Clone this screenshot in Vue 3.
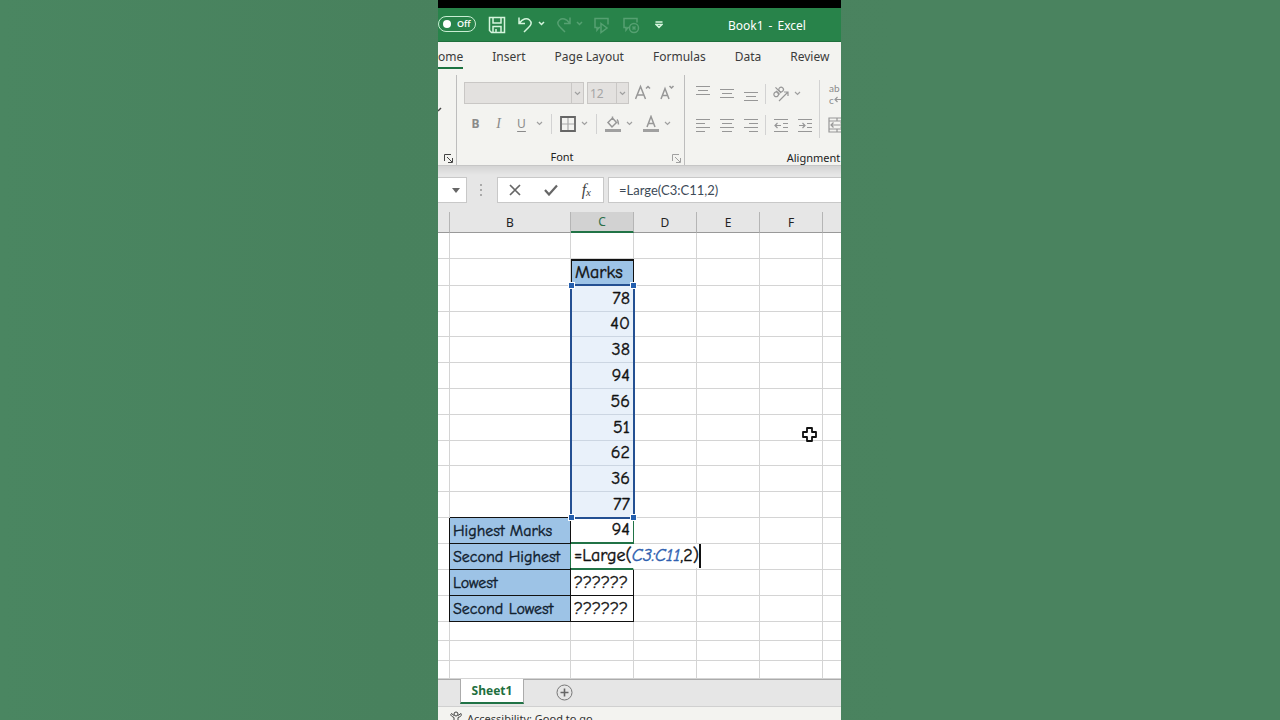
<script setup>
import { ref } from 'vue'

const tabs = ['ome', 'Insert', 'Page Layout', 'Formulas', 'Data', 'Review']
const formula = ref('=Large(C3:C11,2)')
const columns = [
  { id: 'A', label: '', width: 12 },
  { id: 'B', label: 'B', width: 121 },
  { id: 'C', label: 'C', width: 63 },
  { id: 'D', label: 'D', width: 63 },
  { id: 'E', label: 'E', width: 63 },
  { id: 'F', label: 'F', width: 63 },
  { id: 'G', label: '' }
]
const rows = [
  { h: 26 },
  { h: 27, c: 'Marks', kind: 'title' },
  { h: 26, c: '78', kind: 'mark' },
  { h: 25, c: '40', kind: 'mark' },
  { h: 26, c: '38', kind: 'mark' },
  { h: 26, c: '94', kind: 'mark' },
  { h: 26, c: '56', kind: 'mark' },
  { h: 26, c: '51', kind: 'mark' },
  { h: 25, c: '62', kind: 'mark' },
  { h: 26, c: '36', kind: 'mark' },
  { h: 26, c: '77', kind: 'mark last' },
  { h: 26, b: 'Highest Marks', c: '94', kind: 'num boxed' },
  { h: 26, b: 'Second Highest', kind: 'editing' },
  { h: 26, b: 'Lowest', c: '??????', kind: 'boxed' },
  { h: 26, b: 'Second Lowest', c: '??????', kind: 'boxed' },
  { h: 19 },
  { h: 20 },
  { h: 18 }
]
</script>

<template>
  <div class="stage">
    <main class="excel">
      <div class="notch"></div>
      <header class="titlebar">
        <button class="toggle" role="switch" aria-checked="false"><i class="knob"></i>Off</button>
        <button class="qa save" aria-label="Save">
          <svg width="18" height="18" viewBox="0 0 18 18"><path d="M1.5 1.5h15v15h-13l-2-2zM5 1.5v5.500h8v-5.500M5 16.500v-6h8v6M8 16v-3" /></svg>
        </button>
        <button class="qa undo" aria-label="Undo">
          <svg width="28" height="18" viewBox="0 0 28 18"><path d="M2 1.500v6h6M2.500 7c3-4 7-5.500 10-3s1.500 5.500-1 7.500l-4.500 4.500" /><path d="M22 6l2.500 2.500L27 6" /></svg>
        </button>
        <button class="qa redo dim" aria-label="Redo">
          <svg width="28" height="18" viewBox="0 0 28 18"><path d="M14 1.500v6h-6M13.500 7c-3-4-7-5.500-10-3s-1.500 5.500 1 7.500l4.500 4.500" /><path d="M21 6l2.500 2.500L26 6" /></svg>
        </button>
        <button class="qa play dim" aria-label="Run">
          <svg width="18" height="18" viewBox="0 0 18 18"><path d="M7 11.500h-1l-2 2.500v-2.500H2v-9h13v6M8 7.500l6 4.500-6 4.500z" /></svg>
        </button>
        <button class="qa stop dim" aria-label="Stop">
          <svg width="18" height="18" viewBox="0 0 18 18"><path d="M7 11.500h-1l-2 2.500v-2.500H2v-9h13v4" /><circle cx="12" cy="12" r="4.500" /><path d="M10.500 10.500l3 3m0-3l-3 3" /></svg>
        </button>
        <button class="qa more" aria-label="Customize toolbar">
          <svg width="8" height="8" viewBox="0 0 8 8"><path d="M0.500 1h7M1 3.500l3 3 3-3z" /></svg>
        </button>
        <span class="book"><span>Book1</span><span>-</span><span>Excel</span></span>
      </header>

      <nav class="tabs">
        <a v-for="(t, i) in tabs" :key="t" href="#" :class="{ on: i === 0 }">{{ t }}</a>
      </nav>

      <section class="ribbon">
        <div class="group clip">
          <svg class="edge" width="4" height="6" viewBox="0 0 4 6"><path d="M0 4l3-3" stroke="#444" stroke-width="1.500" fill="none" /></svg>
          <button class="launch dark" aria-label="Clipboard settings">
            <svg width="9" height="9" viewBox="0 0 9 9"><path d="M0.500 7V0.500H7M3 3l5 5M8.500 4v4.500H4" /></svg>
          </button>
        </div>
        <div class="group font">
          <div class="row">
            <span class="combo wide"><select aria-label="Font name" disabled><option></option></select><i><svg class="chev" width="7" height="5" viewBox="0 0 7 5"><path d="M1 1l2.500 2.500L6 1" /></svg></i></span>
            <span class="combo"><select aria-label="Font size" disabled><option>12</option></select><i><svg class="chev" width="7" height="5" viewBox="0 0 7 5"><path d="M1 1l2.500 2.500L6 1" /></svg></i></span>
            <button class="t w24" aria-label="Increase font size"><svg width="16" height="18" viewBox="0 0 16 18"><path stroke-width="1.500" d="M0.500 15L5.500 2.500l5 12.500M2.500 11h6M11 4.500l2-2 2 2" /></svg></button>
            <button class="t w24" aria-label="Decrease font size"><svg width="16" height="18" viewBox="0 0 16 18"><path stroke-width="1.500" d="M2 15L6 4.500 10 15M3.500 11.500h5M10.500 2l2 2 2-2" /></svg></button>
          </div>
          <div class="row">
            <button class="t w23 bold">B</button>
            <button class="t w23 ital">I</button>
            <button class="t w23 under">U</button>
            <button class="t w12" aria-label="Underline styles"><svg class="chev" width="7" height="5" viewBox="0 0 7 5"><path d="M1 1l2.500 2.500L6 1" /></svg></button>
            <i class="sep"></i>
            <button class="t w20" aria-label="Borders"><svg width="16" height="16" viewBox="0 0 16 16"><path d="M1 1h14v14H1z" stroke="#666" stroke-width="1.800" /><path d="M8 2v12M2 8h12" stroke="#aaa" /></svg></button>
            <button class="t w12" aria-label="Border styles"><svg class="chev" width="7" height="5" viewBox="0 0 7 5"><path d="M1 1l2.500 2.500L6 1" /></svg></button>
            <i class="sep"></i>
            <button class="t w20" aria-label="Fill color"><svg width="16" height="18" viewBox="0 0 16 18"><path stroke-width="1.500" d="M3 7.500L7.500 3l4 4.500L7 12zM7.500 5V1.500M12 4.500c1 1 1.500 2.500 1.500 5" /><path d="M0 15.500h16" stroke="#a0a0a0" stroke-width="3" /></svg></button>
            <button class="t w12" aria-label="Fill colors"><svg class="chev" width="7" height="5" viewBox="0 0 7 5"><path d="M1 1l2.500 2.500L6 1" /></svg></button>
            <button class="t w20 gap" aria-label="Font color"><svg width="16" height="18" viewBox="0 0 16 18"><path stroke-width="1.500" d="M4 12L8 1.500 12 12M5.500 8.500h5" /><path d="M0 15.500h16" stroke="#a0a0a0" stroke-width="3" /></svg></button>
            <button class="t w12" aria-label="Font colors"><svg class="chev" width="7" height="5" viewBox="0 0 7 5"><path d="M1 1l2.500 2.500L6 1" /></svg></button>
          </div>
          <div class="caption">Font</div>
          <button class="launch" aria-label="Font settings">
            <svg width="9" height="9" viewBox="0 0 9 9"><path d="M0.500 7V0.500H7M3 3l5 5M8.500 4v4.500H4" /></svg>
          </button>
        </div>
        <div class="group align">
          <div class="cols">
            <div class="stack">
              <div class="row">
                <button class="t w24" aria-label="Top align"><svg width="14" height="18" viewBox="0 0 14 18"><path d="M0 1.500h14M2 5.500h10M0 9.500h14" /></svg></button>
                <button class="t w24" aria-label="Middle align"><svg width="14" height="18" viewBox="0 0 14 18"><path d="M0 4.500h14M2 8.500h10M0 12.500h14" /></svg></button>
                <button class="t w24" aria-label="Bottom align"><svg width="14" height="18" viewBox="0 0 14 18"><path d="M0 7.500h14M2 11.500h10M0 15.500h14" /></svg></button>
                <i class="sep near"></i>
                <button class="t w24" aria-label="Orientation"><svg width="18" height="18" viewBox="0 0 18 18"><g transform="rotate(-45 7 8)"><circle cx="4" cy="7" r="2.300" /><path d="M6.500 4.500v5M8.500 1.500v8" /><circle cx="11" cy="7" r="2.300" /></g><path d="M7 16L16 7M12 7h4v4" /></svg></button>
                <button class="t w8" aria-label="Orientation options"><svg class="chev" width="7" height="5" viewBox="0 0 7 5"><path d="M1 1l2.500 2.500L6 1" /></svg></button>
              </div>
              <div class="row">
                <button class="t w24" aria-label="Align left"><svg width="14" height="14" viewBox="0 0 14 14"><path d="M0 1.500h14M0 5.500h9M0 9.500h14M0 13.500h9" /></svg></button>
                <button class="t w24" aria-label="Center"><svg width="14" height="14" viewBox="0 0 14 14"><path d="M0 1.500h14M2 5.500h10M0 9.500h14M2 13.500h10" /></svg></button>
                <button class="t w24" aria-label="Align right"><svg width="14" height="14" viewBox="0 0 14 14"><path d="M0 1.500h14M5 5.500h9M0 9.500h14M5 13.500h9" /></svg></button>
                <i class="sep near"></i>
                <button class="t w24" aria-label="Decrease indent"><svg width="14" height="14" viewBox="0 0 14 14"><path d="M0 1.500h14M9 5.500h5M9 9.500h5M0 13.500h14M1 7.500h6M3.500 5L1 7.500 3.500 10" /></svg></button>
                <button class="t w24" aria-label="Increase indent"><svg width="14" height="14" viewBox="0 0 14 14"><path d="M0 1.500h14M9 5.500h5M9 9.500h5M0 13.500h14M1 7.500h6M4.500 5L7 7.500 4.500 10" /></svg></button>
              </div>
            </div>
            <i class="sep tall"></i>
            <div class="stack right">
              <div class="row"><button class="t wrap" aria-label="Wrap text"><span>ab</span><span>c<svg width="8" height="7" viewBox="0 0 8 7"><path d="M1 3.500h6M3.500 1L1 3.500 3.500 6" /></svg></span></button></div>
              <div class="row"><button class="t" aria-label="Merge"><svg width="18" height="16" viewBox="0 0 18 16"><path d="M1 1h16v14H1zM1 4h16M1 12h16M9 1v3M9 12v3M3 8h12M5.500 5.500L3 8l2.500 2.500M12.500 5.500L15 8l-2.500 2.500" /></svg></button></div>
            </div>
          </div>
          <div class="caption">Alignment</div>
        </div>
      </section>

      <section class="fbar">
        <button class="namebox" aria-label="Name box"><svg width="8" height="5" viewBox="0 0 8 5"><path d="M0 0h8L4 5z" fill="#666" /></svg></button>
        <svg class="dots" width="2" height="12" viewBox="0 0 2 12"><path d="M0 0h2v2H0zM0 5h2v2H0zM0 10h2v2H0z" fill="#aaa" /></svg>
        <div class="fx">
          <button aria-label="Cancel"><svg width="12" height="12" viewBox="0 0 12 12"><path d="M1 1l10 10M11 1L1 11" stroke="#666" stroke-width="1.700" fill="none" /></svg></button>
          <button aria-label="Enter"><svg width="14" height="12" viewBox="0 0 14 12"><path d="M1 6l4 4.500L13 1.500" stroke="#666" stroke-width="2.200" fill="none" /></svg></button>
          <button class="fn" aria-label="Insert function">f<sub>x</sub></button>
        </div>
        <input v-model="formula" class="formula" aria-label="Formula" />
      </section>

      <section class="sheet">
        <table>
          <colgroup>
            <col v-for="c in columns" :key="c.id" :style="c.width ? { width: c.width + 'px' } : null" />
          </colgroup>
          <thead>
            <tr>
              <th v-for="c in columns" :key="c.id" :class="{ active: c.id === 'C' }">{{ c.label }}</th>
            </tr>
          </thead>
          <tbody>
            <tr v-for="(r, i) in rows" :key="i" :style="{ height: r.h + 'px' }">
              <td></td>
              <td :class="{ label: r.b, above: i === 10 }">{{ r.b }}</td>
              <td :class="r.kind">
                <div v-if="r.kind === 'editing'" class="editor">=Large(<em>C3:C11</em>,2)</div>
                <template v-else>{{ r.c }}</template>
              </td>
              <td></td><td></td><td></td><td></td>
            </tr>
          </tbody>
        </table>
        <div class="range"><i></i><i></i><i></i><i></i></div>
        <svg class="pointer" width="17" height="17" viewBox="0 0 17 17"><path d="M6 2h5v4h4v5h-4v4H6v-4H2V6h4z" fill="#fff" stroke="#111" stroke-width="1.800" stroke-linejoin="round" /></svg>
      </section>

      <footer class="sheets">
        <button class="sheet-tab">Sheet1</button>
        <button class="add" aria-label="New sheet"><svg width="17" height="17" viewBox="0 0 17 17"><circle cx="8.500" cy="8.500" r="7.500" fill="none" stroke="#777" /><path d="M8.500 4.500v8M4.500 8.500h8" stroke="#666" stroke-width="1.600" /></svg></button>
      </footer>
      <div class="status">
        <svg width="15" height="16" viewBox="0 0 15 16"><circle cx="6" cy="3" r="2" /><path d="M4 4.500L1.500 2.500M8 4.500l3-2M1.500 2.500C0 4 1 5 4 6.500v3L2.500 14M8 6.500c3-1 4-2 3-4M8 6.500v3M9 11l2 2 3.500-4" /></svg>
        <span>Accessibility: Good to go</span>
      </div>
    </main>
  </div>
</template>

<style>
body { background: #4a835f; overflow: hidden; }
</style>

<style scoped>
* { box-sizing: border-box; }
.stage {
  display: grid;
  grid-template-columns: 438fr 403fr 439fr;
  height: 100vh;
  overflow: hidden;
  background: linear-gradient(90deg, #4a8661 0, #48815d 30%, #4a835f 70%, #4a835f 100%);
  font-family: "Noto Sans", "Open Sans", sans-serif;
  font-size: 12px;
  color: #333;
}
.excel { grid-column: 2; display: flex; flex-direction: column; min-width: 0; overflow: hidden; background: #e6e6e6; }
.excel > * { flex: none; }
button { border: 0; padding: 0; background: none; font: inherit; color: inherit; display: flex; align-items: center; justify-content: center; }
svg { display: block; flex: none; }
.notch { height: 8px; background: #000; }
.titlebar { height: 34px; padding-top: 1px; display: flex; align-items: center; background: #28834a; border-bottom: 1px solid #1f6f3c; color: #fff; }
.toggle { width: 38px; height: 16px; border: 1px solid #c9eed3; border-radius: 8px; gap: 6px; font-family: "Open Sans", sans-serif; font-size: 9px; font-weight: 600; justify-content: flex-start; padding-left: 4px; margin-bottom: 3px; }
.knob { width: 8px; height: 8px; border-radius: 50%; background: #fff; }
.qa svg { fill: none; stroke: #d5f5dd; stroke-width: 1.5; }
.qa.dim svg { stroke: #55a071; }
.save { margin-left: 12px; }
.undo { margin-left: 11px; }
.redo { margin-left: 11px; }
.play { margin-left: 9px; }
.stop { margin-left: 11px; }
.more { margin-left: 15px; }
.book { display: flex; gap: 5px; margin-left: 65px; white-space: nowrap; }
.tabs { height: 33px; display: flex; gap: 29px; padding-top: 5px; background: #f3f3f0; }
.tabs a { height: 22px; line-height: 20px; color: #3b3b3b; text-decoration: none; white-space: nowrap; }
.tabs a.on { border-bottom: 2px solid #1c7340; }
.ribbon { height: 91px; display: flex; background: #f3f3f0; border-bottom: 1px solid #c6c6c6; overflow: hidden; }
.group { flex: none; position: relative; display: flex; flex-direction: column; border-right: 1px solid #bdbdbd; height: 90px; }
.clip { width: 19px; padding-top: 32px; }
.font { width: 228px; padding: 3px 0 0 7px; }
.align { width: 256px; padding: 3px 0 0 6px; }
.row { height: 31px; display: flex; align-items: center; }
.launch { position: absolute; right: 3px; bottom: 2px; }
.launch svg { fill: none; stroke: #a0a0a0; }
.launch.dark svg { stroke: #444; }
.combo { display: flex; width: 42px; height: 22px; margin-right: 2px; border: 1px solid #c9c7c5; background: #e3e1df; }
.combo.wide { width: 120px; margin-right: 3px; }
.combo select { flex: 1; min-width: 0; appearance: none; border: 0; background: none; padding: 0 0 0 2px; font: inherit; color: #a6a6a6; opacity: 1; }
.combo i { width: 12px; display: flex; align-items: center; justify-content: center; border-left: 1px solid #c9c7c5; }
.t { height: 24px; color: #8a8a8a; }
.t svg { fill: none; stroke: #979797; stroke-width: 1.2; }
.w8 { width: 8px; }
.w12 { width: 12px; }
.w20 { width: 20px; }
.w23 { width: 23px; }
.w24 { width: 24px; }
.gap { margin-left: 6px; }
.t .chev, .chev { fill: none; stroke: #a0a0a0; stroke-width: 1.2; }
.bold { font-weight: 700; }
.ital { font-family: "Liberation Serif", serif; font-style: italic; font-size: 14px; }
.under { text-decoration: underline; text-underline-offset: 3px; }
.sep { width: 1px; height: 20px; margin: 0 6px; background: #d2d2d2; }
.sep.near { margin: 0 3px 0 2px; }
.sep.tall { height: 58px; margin: 2px 4px 0 2px; }
.cols { display: flex; }
.stack.right .t { justify-content: flex-start; margin-left: 4px; }
.stack.right .wrap { flex-direction: column; align-items: flex-start; }
.wrap span { display: flex; align-items: center; font-family: Lato, sans-serif; font-size: 10px; line-height: 12px; padding-left: 1px; }
.caption { line-height: 16px; margin-top: 10px; margin-right: 4px; text-align: center; font-size: 11px; color: #222; }
.font .caption { margin-right: 24px; }
.fbar { height: 46px; padding: 11px 0 9px; display: flex; align-items: stretch; background: linear-gradient(#d4d4d4, #e6e6e6 9px); }
.namebox { width: 29px; background: #fff; border: 1px solid #c8c8c8; border-left: 0; padding-left: 8px; }
.dots { margin: 7px 15px 0 13px; }
.fx { width: 107px; display: flex; justify-content: space-between; padding: 0 12px 0 11px; margin-right: 4px; background: #fff; border: 1px solid #c8c8c8; }
.fn { font-family: "Liberation Serif", serif; font-style: italic; font-size: 16px; color: #444; }
.fn sub { font-size: 11px; line-height: 10px; padding-top: 4px; }
.formula { flex: 1; min-width: 0; border: 1px solid #c8c8c8; border-right: 0; padding: 0 0 0 10px; background: #fff; color: #3d4a57; font-family: Lato, sans-serif; font-size: 13px; outline: 0; border-radius: 0; }
.sheet { position: relative; background: #fff; }
table { width: 100%; table-layout: fixed; border-collapse: separate; border-spacing: 0; }
th { height: 21px; padding: 1px 0 0; font-weight: 400; line-height: 18px; color: #222; background: #e6e6e6; border-right: 1px solid #b5b5b5; border-bottom: 1px solid #999; }
th.active { background: #d2d2d2; color: #2b7048; border-bottom: 2px solid #217346; padding: 0; }
td { height: inherit; padding: 0 3px; line-height: 18px; border-right: 1px solid #d4d4d4; border-bottom: 1px solid #d4d4d4; white-space: nowrap; font-family: "Comic Neue", "Comic Sans MS", Lato, sans-serif; font-size: 18px; color: #111; -webkit-text-stroke: 0.4px; }
th:last-child, td:last-child { border-right: 0; }
td.title { background: #9dc3e6; border: 2px solid #111; border-right-width: 1px; border-left-width: 1px; }
td.mark, td.num { text-align: right; }
td.mark { background: #e9f1fa; border-bottom-color: #ccd6e2; }
td.label { background: #9dc3e6; border-right-color: #111; border-bottom-color: #111; box-shadow: -1px 0 #111; color: #10202e; font-size: 16px; }
td.above { border-bottom-color: #111; }
td.boxed { border-right-color: #111; border-bottom-color: #111; }
td.num { border-bottom: 2px solid #217346; border-right-color: #217346; }
td.editing { position: relative; border-right-color: #fff; border-bottom: 2px solid #217346; }
.editor { position: absolute; left: -1px; top: 0; height: 24px; padding-left: 3px; line-height: 24px; background: #fff; border-left: 1px solid #217346; border-right: 2px solid #111; }
.editor em { color: #2f5fb0; }
.range { position: absolute; left: 132px; top: 72px; width: 65px; height: 235px; border: 2px solid #245092; }
.range i { position: absolute; width: 7px; height: 7px; background: #245fae; border: 1px solid #fff; left: -4px; top: -4px; }
.range i:nth-child(even) { left: auto; right: -4px; }
.range i:nth-child(n + 3) { top: auto; bottom: -4px; }
.pointer { position: absolute; left: 363px; top: 214px; }
.sheets { height: 27px; display: flex; align-items: flex-start; padding-left: 22px; border-top: 1px solid #ababab; background: #e6e6e6; }
.sheet-tab { width: 64px; height: 25px; margin-top: -1px; background: #fff; border: 1px solid #ababab; border-top: 0; border-bottom: 2px solid #217346; font-weight: 700; color: #1f6f40; }
.add { margin: 4px 0 0 32px; }
.status { height: 24px; display: flex; align-items: center; gap: 2px; padding-left: 12px; background: #f3f3f0; border-top: 1px solid #d0d0d0; font-size: 11px; }
.status svg { fill: none; stroke: #444; }
</style>
